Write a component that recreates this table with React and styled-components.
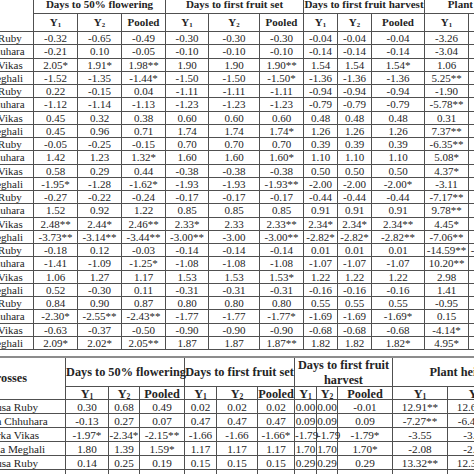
import styled, { createGlobalStyle } from 'styled-components'

const GlobalStyle = createGlobalStyle`
  html, body {
    margin: 0;
    padding: 0;
    background: #ffffff;
  }
  body {
    font-family: "Liberation Serif", "Times New Roman", serif;
    color: #242424;
  }
`

const Page = styled.div`
  width: 474px;
  height: 474px;
  overflow: hidden;
  background: #ffffff;
`

const Grid = styled.div`
  display: grid;
  width: max-content;
  grid-template-columns: ${(p) => p.$cols.map((w) => w + 'px').join(' ')};
  grid-template-rows: ${(p) => p.$rows};
  margin-left: ${(p) => p.$left}px;
  margin-top: ${(p) => p.$top}px;
  font-size: ${(p) => p.$size}px;
  border-top: ${(p) => (p.$topLine ? '2px solid #8c8c8c' : 'none')};
`

const HeadCell = styled.div`
  box-sizing: border-box;
  display: grid;
  align-items: center;
  text-align: center;
  border-right: 1px solid #505050;
  border-bottom: 1px solid #505050;
  font-weight: 700;
  font-size: ${(p) => p.$size || 'inherit'};
  line-height: 15px;
  white-space: ${(p) => (p.$wrap ? 'normal' : 'nowrap')};
  grid-column: span ${(p) => p.$span || 1};
  grid-row: span ${(p) => p.$rowSpan || 1};
  padding-right: ${(p) => p.$shift || 0}px;
`

const Sub = styled.sub`
  font-size: 0.62em;
  vertical-align: -0.15em;
  line-height: 0;
`

const Cell = styled.div`
  box-sizing: border-box;
  display: grid;
  align-items: center;
  text-align: center;
  border-right: 1px solid #505050;
  border-bottom: 1px solid #505050;
  line-height: 12px;
  white-space: nowrap;
`

const TOP_COLS = [71, 44, 44, 44, 43, 51, 44, 34, 34, 53, 44, 44, 40]
const BOTTOM_COLS = [103, 43, 31, 45, 32, 41, 37, 22, 21, 55, 55, 55, 55]

const TOP_LABELS = ['Pusa Ruby', 'P. Chhuhara', 'Arka Vikas', 'A. Meghali']
const BOTTOM_LABELS = ['Pusa Ruby', 'Pusa Chhuhara', 'Arka Vikas', 'Arka Meghali']

const TRAITS = [
  'Days to 50% flowering',
  'Days to first fruit set',
  'Days to first fruit harvest',
  'Plant height (cm)',
]

const TOP_ROWS = [
  ['-0.32', '-0.65', '-0.49', '-0.30', '-0.30', '-0.30', '-0.04', '-0.04', '-0.04', '-3.26', '-2.87', '-3.07'],
  ['-0.21', '0.10', '-0.05', '-0.10', '-0.10', '-0.10', '-0.14', '-0.14', '-0.14', '-3.04', '-3.12', '-3.08'],
  ['2.05*', '1.91*', '1.98**', '1.90', '1.90', '1.90**', '1.54', '1.54', '1.54*', '1.06', '1.44', '1.25'],
  ['-1.52', '-1.35', '-1.44*', '-1.50', '-1.50', '-1.50*', '-1.36', '-1.36', '-1.36', '5.25**', '4.91*', '5.08**'],
  ['0.22', '-0.15', '0.04', '-1.11', '-1.11', '-1.11', '-0.94', '-0.94', '-0.94', '-1.90', '-1.63', '-1.77'],
  ['-1.12', '-1.14', '-1.13', '-1.23', '-1.23', '-1.23', '-0.79', '-0.79', '-0.79', '-5.78**', '-5.02*', '-5.40**'],
  ['0.45', '0.32', '0.38', '0.60', '0.60', '0.60', '0.48', '0.48', '0.48', '0.31', '0.58', '0.45'],
  ['0.45', '0.96', '0.71', '1.74', '1.74', '1.74*', '1.26', '1.26', '1.26', '7.37**', '6.84*', '7.11**'],
  ['-0.05', '-0.25', '-0.15', '0.70', '0.70', '0.70', '0.39', '0.39', '0.39', '-6.35**', '-5.77*', '-6.06**'],
  ['1.42', '1.23', '1.32*', '1.60', '1.60', '1.60*', '1.10', '1.10', '1.10', '5.08*', '4.62*', '4.85**'],
  ['0.58', '0.29', '0.44', '-0.38', '-0.38', '-0.38', '0.50', '0.50', '0.50', '4.37*', '3.95*', '4.16*'],
  ['-1.95*', '-1.28', '-1.62*', '-1.93', '-1.93', '-1.93**', '-2.00', '-2.00', '-2.00*', '-3.11', '-2.70', '-2.91'],
  ['-0.27', '-0.22', '-0.24', '-0.17', '-0.17', '-0.17', '-0.44', '-0.44', '-0.44', '-7.17**', '-6.88*', '-7.03**'],
  ['1.52', '0.92', '1.22', '0.85', '0.85', '0.85', '0.91', '0.91', '0.91', '9.78**', '9.14*', '9.46**'],
  ['2.48**', '2.44*', '2.46**', '2.33*', '2.33', '2.33**', '2.34*', '2.34*', '2.34**', '4.45*', '4.03*', '4.24*'],
  ['-3.73**', '-3.14**', '-3.44**', '-3.00**', '-3.00', '-3.00**', '-2.82*', '-2.82*', '-2.82**', '-7.06**', '-6.52*', '-6.79**'],
  ['-0.18', '0.12', '-0.03', '-0.14', '-0.14', '-0.14', '0.01', '0.01', '0.01', '-14.59**', '-13.85**', '-14.22**'],
  ['-1.41', '-1.09', '-1.25*', '-1.08', '-1.08', '-1.08', '-1.07', '-1.07', '-1.07', '10.20**', '9.76*', '9.98**'],
  ['1.06', '1.27', '1.17', '1.53', '1.53', '1.53*', '1.22', '1.22', '1.22', '2.98', '2.41', '2.70'],
  ['0.52', '-0.30', '0.11', '-0.31', '-0.31', '-0.31', '-0.16', '-0.16', '-0.16', '1.41', '1.12', '1.27'],
  ['0.84', '0.90', '0.87', '0.80', '0.80', '0.80', '0.55', '0.55', '0.55', '-0.95', '-0.73', '-0.84'],
  ['-2.30*', '-2.55**', '-2.43**', '-1.77', '-1.77', '-1.77*', '-1.69', '-1.69', '-1.69*', '0.15', '0.36', '0.26'],
  ['-0.63', '-0.37', '-0.50', '-0.90', '-0.90', '-0.90', '-0.68', '-0.68', '-0.68', '-4.14*', '-3.87*', '-4.01*'],
  ['2.09*', '2.02*', '2.05**', '1.87', '1.87', '1.87**', '1.82', '1.82', '1.82*', '4.95*', '4.48*', '4.72*'],
]

const BOTTOM_ROWS = [
  ['0.30', '0.68', '0.49', '0.02', '0.02', '0.02', '0.00', '0.00', '-0.01', '12.91**', '12.63**', '12.77**'],
  ['-0.13', '0.27', '0.07', '0.47', '0.47', '0.47', '0.09', '0.09', '0.09', '-7.27**', '-6.45**', '-6.86**'],
  ['-1.97*', '-2.34*', '-2.15**', '-1.66', '-1.66', '-1.66*', '-1.79', '-1.79', '-1.79*', '-3.55', '-3.18', '-3.37'],
  ['1.80', '1.39', '1.59*', '1.17', '1.17', '1.17', '1.70', '1.70', '1.70*', '-2.08', '-2.21', '-2.15'],
  ['0.14', '0.25', '0.19', '0.15', '0.15', '0.15', '0.29', '0.29', '0.29', '13.32**', '12.36**', '12.84**'],
  ['-0.41', '-0.22', '-0.32', '0.36', '0.36', '0.36', '0.12', '0.12', '0.12', '-4.67*', '-4.02*', '-4.35*'],
]

function YearHeads({ size }) {
  return TRAITS.map((t) => [
    <HeadCell key={t + '1'} $size={size}>
      <span>Y<Sub>1</Sub></span>
    </HeadCell>,
    <HeadCell key={t + '2'} $size={size}>
      <span>Y<Sub>2</Sub></span>
    </HeadCell>,
    <HeadCell key={t + 'p'} $size={size}>
      Pooled
    </HeadCell>,
  ])
}

function DataRows({ rows, labels }) {
  return rows.map((vals, i) => [
    <Cell key={'l' + i}>{labels[i % 4]}</Cell>,
    ...vals.map((v, j) => <Cell key={i + '-' + j}>{v}</Cell>),
  ])
}

function TopTable() {
  return (
    <Grid $cols={TOP_COLS} $rows="18px 18px repeat(24, 13.25px)" $left={-37} $top={-4} $size={11}>
      <HeadCell $rowSpan={2} />
      {TRAITS.map((t) => (
        <HeadCell key={t} $span={3}>
          {t}
        </HeadCell>
      ))}
      <YearHeads />
      <DataRows rows={TOP_ROWS} labels={TOP_LABELS} />
    </Grid>
  )
}

function BottomTable() {
  return (
    <Grid
      $cols={BOTTOM_COLS}
      $rows="29px 13px repeat(6, 14.1px)"
      $left={-37}
      $top={6}
      $size={11.2}
      $topLine
    >
      <HeadCell $rowSpan={2} $size="12.3px" $shift={14}>
        Crosses
      </HeadCell>
      {TRAITS.map((t, i) => (
        <HeadCell key={t} $span={3} $size="12.3px" $wrap={i === 2}>
          {t}
        </HeadCell>
      ))}
      <YearHeads size="12.3px" />
      <DataRows rows={BOTTOM_ROWS} labels={BOTTOM_LABELS} />
    </Grid>
  )
}

export default function App() {
  return (
    <Page>
      <GlobalStyle />
      <TopTable />
      <BottomTable />
    </Page>
  )
}
